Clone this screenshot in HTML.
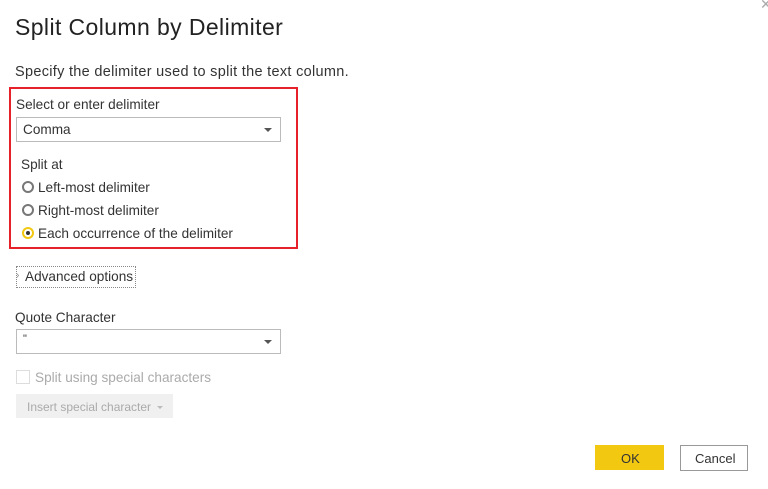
<!DOCTYPE html>
<html><head><style>
body{margin:0;width:768px;height:489px;background:#fff;font-family:"Liberation Sans",sans-serif;color:#333;position:relative;overflow:hidden}
.a{position:absolute;white-space:nowrap}
.t{font-size:13.6px;color:#333}
.sel{position:absolute;border:1px solid #bbb;background:#fff;box-sizing:border-box}
.arr{position:absolute;right:8px;top:10px;width:0;height:0;border-left:4px solid transparent;border-right:4px solid transparent;border-top:4px solid #555}
.rad{position:absolute;width:8px;height:8px;border:2px solid #777;border-radius:50%}
</style></head><body>
<div class="a" style="left:760px;top:-4px;font-size:14px;color:#aaa">✕</div>
<div class="a" style="left:15px;top:14px;font-size:23px;color:#222;letter-spacing:0.4px">Split Column by Delimiter</div>
<div class="a t" style="left:15px;top:64px;font-size:14.5px;letter-spacing:0.3px">Specify the delimiter used to split the text column.</div>
<div class="a" style="left:9px;top:87px;width:285px;height:158px;border:2px solid #e8202a"></div>
<div class="a t" style="left:16px;top:97px">Select or enter delimiter</div>
<div class="sel" style="left:16px;top:117px;width:265px;height:25px"><span class="a t" style="left:6px;top:4px">Comma</span><div class="arr"></div></div>
<div class="a t" style="left:21px;top:157px">Split at</div>
<div class="rad" style="left:22px;top:181px"></div>
<div class="a t" style="left:38px;top:180px">Left-most delimiter</div>
<div class="rad" style="left:22px;top:204px"></div>
<div class="a t" style="left:38px;top:203px">Right-most delimiter</div>
<div class="rad" style="left:22px;top:227px;border-color:#f2c811;background:#fff"><div style="position:absolute;left:2px;top:2px;width:4px;height:4px;border-radius:50%;background:#333"></div></div>
<div class="a t" style="left:38px;top:226px">Each occurrence of the delimiter</div>
<div class="a" style="left:16px;top:266px;width:118px;height:20px;border:1px dotted #888"></div>
<div class="a" style="left:16px;top:270px;font-size:10px;color:#888">›</div>
<div class="a t" style="left:25px;top:269px">Advanced options</div>
<div class="a t" style="left:15px;top:310px">Quote Character</div>
<div class="sel" style="left:16px;top:329px;width:265px;height:25px"><span class="a t" style="left:6px;top:3px;font-size:11px">"</span><div class="arr"></div></div>
<div class="a" style="left:16px;top:370px;width:12px;height:12px;border:1px solid #ddd"></div>
<div class="a t" style="left:35px;top:370px;color:#aaa">Split using special characters</div>
<div class="a" style="left:16px;top:394px;width:157px;height:24px;background:#f0f0f0"></div>
<div class="a" style="left:27px;top:400px;font-size:12px;color:#aaa">Insert special character</div>
<div class="a" style="left:157px;top:406px;width:0;height:0;border-left:3px solid transparent;border-right:3px solid transparent;border-top:3px solid #bbb"></div>
<div class="a" style="left:595px;top:445px;width:69px;height:25px;background:#f2c811"></div>
<div class="a t" style="left:621px;top:451px;font-size:13px">OK</div>
<div class="a" style="left:680px;top:445px;width:66px;height:24px;border:1px solid #999"></div>
<div class="a t" style="left:695px;top:451px;font-size:13px">Cancel</div>
</body></html>
